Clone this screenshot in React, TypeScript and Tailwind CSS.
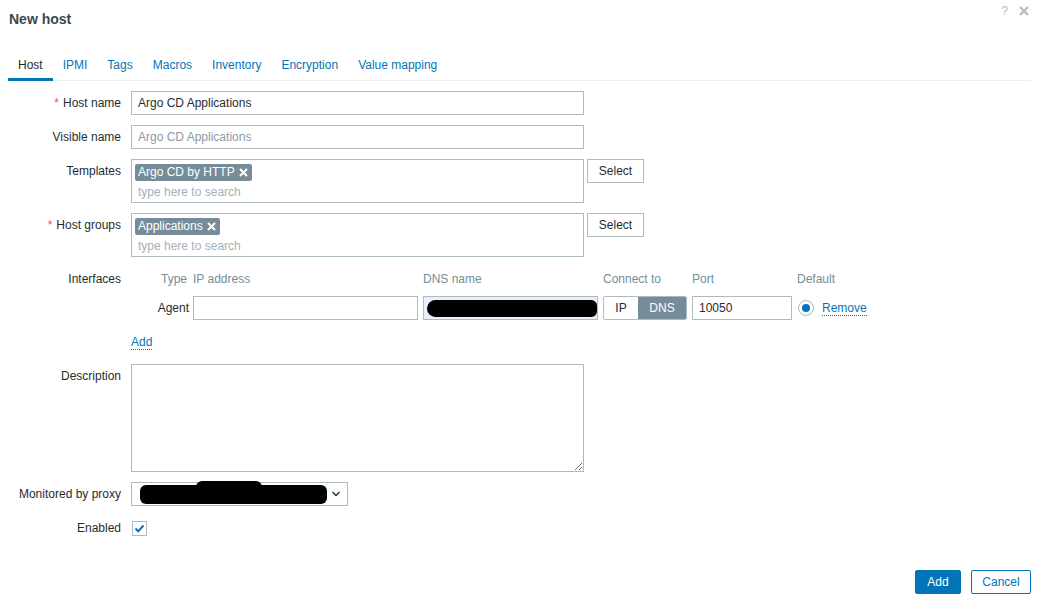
import React from "react";

const LABEL = "w-[113px] shrink-0 text-right h-6 leading-6";
const INPUT = "h-6 border border-[#acbbc2] bg-white px-[6px] leading-[22px] text-[12px] text-[#1f2c33]";

const TABS = ["Host", "IPMI", "Tags", "Macros", "Inventory", "Encryption", "Value mapping"];

function Req() {
  return <span className="text-[#e45959] mr-[4px]">*</span>;
}

function Tag({ text }: { text: string }) {
  return (
    <span className="inline-flex items-center h-[17px] bg-[#768d99] text-white rounded-[2px] pl-[3px] pr-[4px] leading-[17px]">
      {text}
      <svg width="9" height="9" viewBox="0 0 9 9" className="ml-[4px]">
        <path d="M1 1L8 8M8 1L1 8" stroke="#fff" strokeWidth="2" />
      </svg>
    </span>
  );
}

function MultiSelect({ tag }: { tag: string }) {
  return (
    <div className="flex items-start gap-[3px]">
      <div className="w-[453px] h-[44px] border border-[#acbbc2] bg-white px-[3px] pt-[3px]">
        <Tag text={tag} />
        <div className="pl-[3px] leading-[22px] text-[#a3b0b7]">type here to search</div>
      </div>
      <button className="h-6 w-[57px] border border-[#acbbc2] bg-white text-[#1f2c33] leading-[22px]">Select</button>
    </div>
  );
}

function DottedLink({ children }: { children: React.ReactNode }) {
  return (
    <span className="text-[#0275b8] border-b border-dotted border-[#0275b8] leading-[14px]">{children}</span>
  );
}

export default function App() {
  return (
    <div className="w-[1037px] h-[601px] bg-white font-['Liberation_Sans',Arial,sans-serif] text-[12px] text-[#1f2c33] pl-[8px] pr-[6px] relative">
      {/* Header */}
      <div className="h-[38px] flex items-center justify-between">
        <h4 className="text-[14px] font-bold text-[#3b4851] ml-px">New host</h4>
      </div>
      <div className="absolute top-[4px] right-[8px] flex items-center gap-[11px] text-[#acbbc2]">
        <span className="text-[12px] leading-[14px]">?</span>
        <svg width="10" height="10" viewBox="0 0 10 10">
          <path d="M1 1L9 9M9 1L1 9" stroke="#acbbc2" strokeWidth="2" />
        </svg>
      </div>

      {/* Tabs */}
      <div className="mt-[11px] flex border-b border-[#ebeef0]">
        {TABS.map((t, i) => (
          <div
            key={t}
            className={
              i === 0
                ? "px-[10px] pt-[9px] pb-[6px] leading-[14px] border-b-[3px] border-[#0275b8] text-[#1f2c33] -mb-px"
                : "px-[10px] pt-[9px] pb-[6px] leading-[14px] border-b-[3px] border-transparent text-[#0275b8] -mb-px"
            }
          >
            {t}
          </div>
        ))}
      </div>

      {/* Form */}
      <div className="pt-[10px] flex flex-col gap-[10px]">
        <div className="flex gap-[10px]">
          <label className={LABEL}><Req />Host name</label>
          <div className={`${INPUT} w-[453px]`}>Argo CD Applications</div>
        </div>
        <div className="flex gap-[10px]">
          <label className={LABEL}>Visible name</label>
          <div className={`${INPUT} w-[453px] text-[#8e9aa2]`}>Argo CD Applications</div>
        </div>
        <div className="flex gap-[10px]">
          <label className={LABEL}>Templates</label>
          <MultiSelect tag="Argo CD by HTTP" />
        </div>
        <div className="flex gap-[10px]">
          <label className={LABEL}><Req />Host groups</label>
          <MultiSelect tag="Applications" />
        </div>

        {/* Interfaces */}
        <div className="flex gap-[10px]">
          <label className={LABEL}>Interfaces</label>
          <div className="flex flex-col">
            <div className="flex h-6 leading-6 text-[#768d99]">
              <span className="w-[58px] text-right pr-[2px]">Type</span>
              <span className="ml-[4px] w-[225px]">IP address</span>
              <span className="ml-[5px] w-[175px]">DNS name</span>
              <span className="ml-[5px] w-[84px]">Connect to</span>
              <span className="ml-[5px] w-[100px]">Port</span>
              <span className="ml-[5px]">Default</span>
            </div>
            <div className="mt-[5px] flex items-center h-6">
              <span className="w-[58px] text-right">Agent</span>
              <div className={`${INPUT} ml-[4px] w-[225px]`} />
              <div className="ml-[5px] w-[175px] h-6 border border-[#acbbc2] bg-[#e8f0fe] flex items-center pl-[3px]">
                <div className="h-[17px] flex-1 bg-black rounded-l-[9px] rounded-r-[6px]" />
              </div>
              <div className="ml-[5px] w-[84px] h-6 flex border border-[#acbbc2] rounded-[2px] overflow-hidden">
                <span className="w-[34px] bg-white text-center leading-[22px]">IP</span>
                <span className="flex-1 bg-[#768d99] text-white text-center leading-[22px]">DNS</span>
              </div>
              <div className={`${INPUT} ml-[5px] w-[100px]`}>10050</div>
              <span className="ml-[6px] w-[16px] h-[16px] rounded-full border border-[#acbbc2] bg-white flex items-center justify-center">
                <span className="w-[8px] h-[8px] rounded-full bg-[#0275b8]" />
              </span>
              <span className="ml-[8px]"><DottedLink>Remove</DottedLink></span>
            </div>
            <div className="mt-[12px] h-[20px] leading-[20px]">
              <DottedLink>Add</DottedLink>
            </div>
          </div>
        </div>

        <div className="flex gap-[10px] mt-[2px]">
          <label className={LABEL}>Description</label>
          <textarea className="w-[453px] h-[108px] border border-[#acbbc2] bg-white resize outline-none" />
        </div>

        <div className="flex gap-[10px]">
          <label className={`${LABEL} whitespace-nowrap`}>Monitored by proxy</label>
          <div className="w-[217px] h-6 border border-[#acbbc2] bg-white flex items-center pl-[8px] pr-[6px] relative">
            <div className="h-[19px] w-[187px] bg-black rounded-[6px]" />
            <div className="absolute left-[64px] top-[-2px] w-[66px] h-[8px] bg-black rounded-t-[6px]" />
            <svg width="10" height="6" viewBox="0 0 10 6" className="ml-auto">
              <path d="M1.5 1L5 4.5L8.5 1" stroke="#1f2c33" strokeWidth="1.4" fill="none" />
            </svg>
          </div>
        </div>

        <div className="flex gap-[10px] items-center">
          <label className={LABEL}>Enabled</label>
          <span className="ml-px w-[15px] h-[15px] border border-[#acbbc2] bg-white flex items-center justify-center">
            <svg width="11" height="9" viewBox="0 0 11 9">
              <path d="M1.5 4.5L4.2 7.2L9.5 1.5" stroke="#0275b8" strokeWidth="2" fill="none" />
            </svg>
          </span>
        </div>
      </div>

      {/* Footer */}
      <div className="mt-[30px] flex justify-end gap-[10px]">
        <button className="h-6 w-[46px] bg-[#0275b8] border border-[#0275b8] text-white rounded-[2px] leading-[22px]">Add</button>
        <button className="h-6 w-[60px] bg-white border border-[#0275b8] text-[#0275b8] rounded-[2px] leading-[22px]">Cancel</button>
      </div>
    </div>
  );
}
